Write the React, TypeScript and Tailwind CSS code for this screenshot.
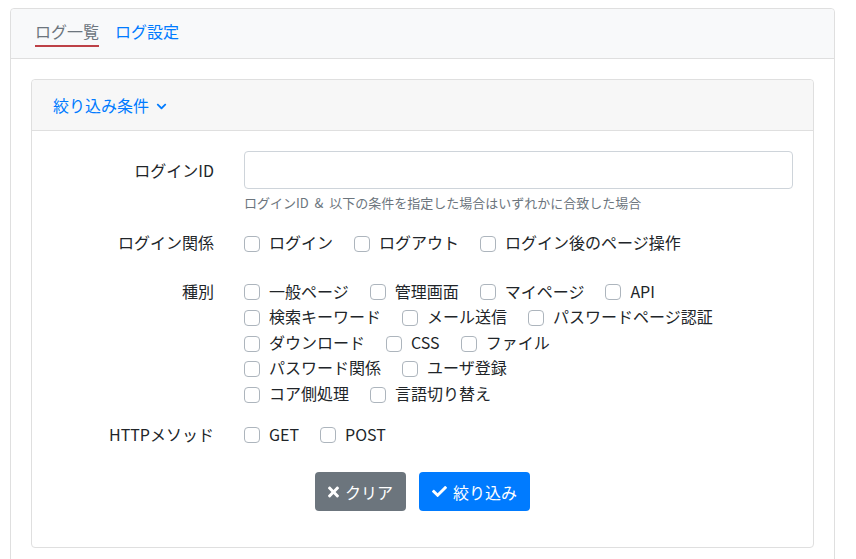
import React from "react";
import { FaChevronDown, FaTimes, FaCheck } from "react-icons/fa";

function Check({ label }: { label: string }) {
  return (
    <label className="flex items-center mr-[21px] whitespace-nowrap">
      <span className="w-[16px] h-[16px] border border-[#adb5bd] rounded-[4px] bg-white translate-y-[1px] shrink-0" />
      <span className="ml-[9px]">{label}</span>
    </label>
  );
}

function Row({ items }: { items: string[] }) {
  return (
    <div className="flex leading-[25.6px]">
      {items.map((t) => (
        <Check key={t} label={t} />
      ))}
    </div>
  );
}

export default function App() {
  const font = { fontFamily: '"Noto Sans CJK JP", "Noto Sans", sans-serif' };
  return (
    <div className="bg-white w-[856px] h-[559px] overflow-hidden text-[16px] text-[#212529]" style={font}>
      <div className="ml-[10px] mt-[8px] w-[825px] border border-[#dfdfdf] rounded-[4px]">
        <div className="h-[50px] bg-[#f8f9fa] border-b border-[#dfdfdf] px-[24px] pt-[10px] flex gap-[16px] rounded-t-[4px]">
          <div className="leading-[24px] pb-[2px] border-b-2 border-[#bd4147] text-[#6c757d] self-start">ログ一覧</div>
          <div className="leading-[24px] pb-[2px] border-b-2 border-transparent text-[#007bff] self-start">ログ設定</div>
        </div>
        <div className="p-[20px] pb-[20px]">
          <div className="border border-[#dfdfdf] rounded-[4px]">
            <div className="h-[51px] bg-[#f7f7f7] border-b border-[#dfdfdf] px-[21px] flex items-center text-[#007bff] rounded-t-[4px]">
              <span>絞り込み条件</span>
              <FaChevronDown className="ml-[7px] translate-y-[1px]" size={11} />
            </div>
            <div className="pt-[20px] pb-[36px] pr-[20px]">
              {/* Login ID */}
              <div className="flex">
                <div className="w-[182px] h-[38px] flex items-center justify-end shrink-0">ログインID</div>
                <div className="ml-[30px] flex-1">
                  <div className="h-[38px] border border-[#ced4da] rounded-[4px] bg-white" />
                  <div className="mt-[3px] text-[13px] leading-[21px] text-[#6c757d] whitespace-pre">
                    {"ログインID  &  以下の条件を指定した場合はいずれかに合致した場合"}
                  </div>
                </div>
              </div>
              {/* Login relation */}
              <div className="flex mt-[17px]">
                <div className="w-[182px] leading-[25.6px] text-right shrink-0">ログイン関係</div>
                <div className="ml-[30px] flex-1">
                  <Row items={["ログイン", "ログアウト", "ログイン後のページ操作"]} />
                </div>
              </div>
              {/* Type */}
              <div className="flex mt-[23px]">
                <div className="w-[182px] leading-[25.6px] text-right shrink-0">種別</div>
                <div className="ml-[30px] flex-1">
                  <Row items={["一般ページ", "管理画面", "マイページ", "API"]} />
                  <Row items={["検索キーワード", "メール送信", "パスワードページ認証"]} />
                  <Row items={["ダウンロード", "CSS", "ファイル"]} />
                  <Row items={["パスワード関係", "ユーザ登録"]} />
                  <Row items={["コア側処理", "言語切り替え"]} />
                </div>
              </div>
              {/* HTTP method */}
              <div className="flex mt-[15px]">
                <div className="w-[182px] leading-[25.6px] text-right shrink-0">HTTPメソッド</div>
                <div className="ml-[30px] flex-1">
                  <Row items={["GET", "POST"]} />
                </div>
              </div>
              {/* Buttons */}
              <div className="flex justify-center gap-[13px] mt-[25px] pl-[20px]">
                <button className="h-[39px] px-[13px] rounded-[4px] bg-[#6c757d] text-white flex items-center gap-[6px]">
                  <FaTimes className="w-[11px] h-[16px]" />
                  <span>クリア</span>
                </button>
                <button className="h-[39px] px-[13px] rounded-[4px] bg-[#007bff] text-white flex items-center gap-[6px]">
                  <FaCheck size={15} />
                  <span>絞り込み</span>
                </button>
              </div>
            </div>
          </div>
        </div>
      </div>
    </div>
  );
}
